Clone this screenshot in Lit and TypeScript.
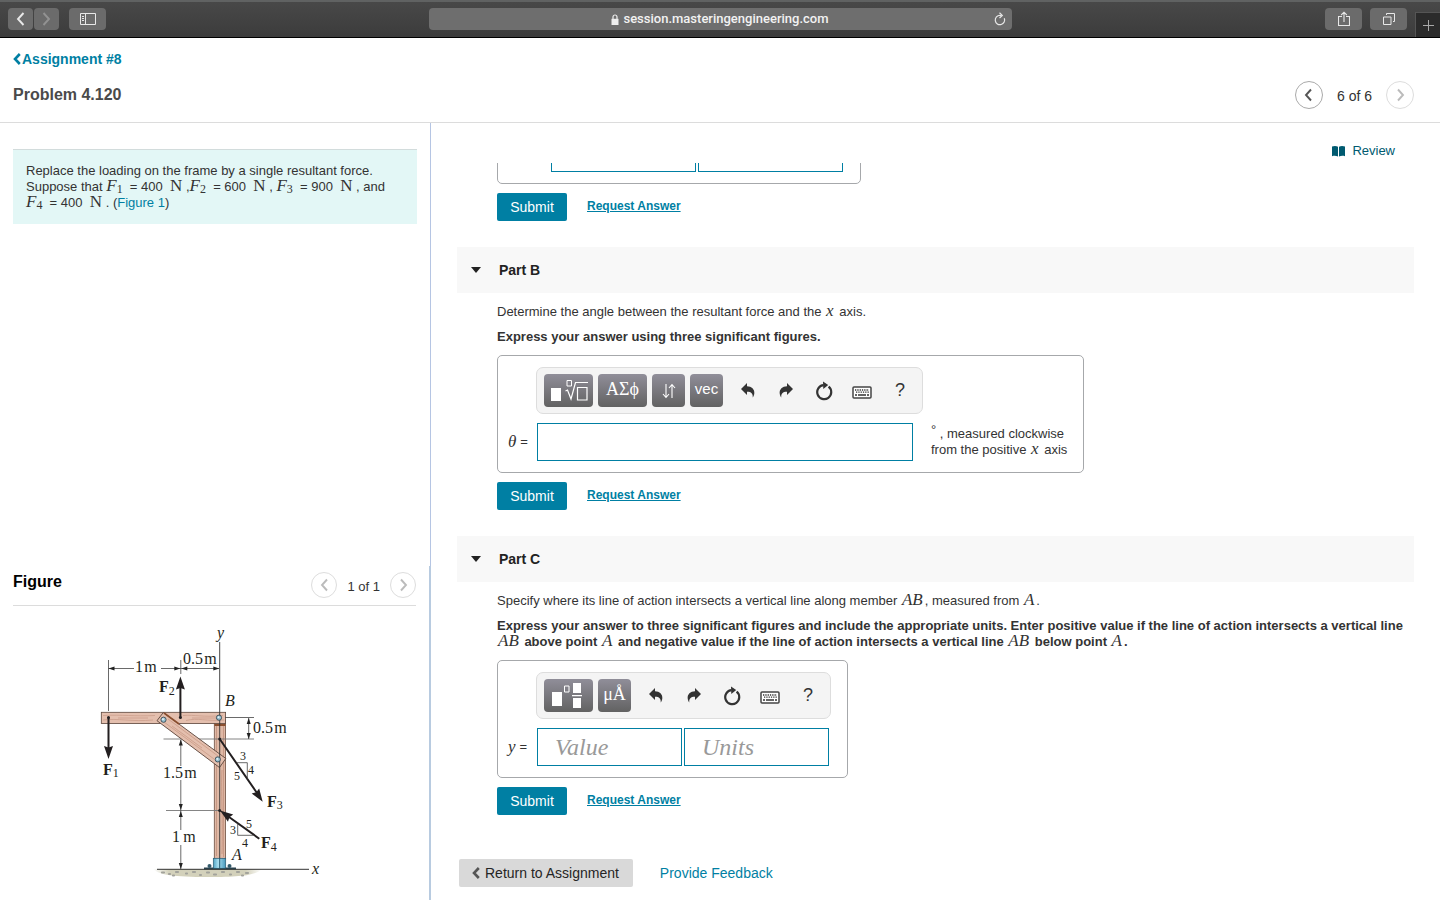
import { LitElement, html, svg, css } from "lit";
import { customElement, property } from "lit/decorators.js";

const undoIcon = html`<svg width="14" height="15" viewBox="0 0 14 15" aria-hidden="true"><path fill="#333" d="M6 0v3.200c4.600 .2 7.800 3 7.300 7.200-.2 1.700-.8 2.900-1.600 4 .4-3.800-1.600-5.700-5.700-5.600V12L0 6z"/></svg>`;
const redoIcon = html`<svg width="14" height="15" viewBox="0 0 14 15" aria-hidden="true"><path fill="#333" d="M8 0v3.200C3.400 3.400.2 6.200.7 10.400c.2 1.700.8 2.900 1.600 4-.4-3.800 1.600-5.700 5.700-5.600V12l6-6z"/></svg>`;
const resetIcon = html`<svg width="18" height="20" viewBox="0 0 18 20" aria-hidden="true"><path d="M13.600 5.700A7 7 0 1 1 8.600 4.200" fill="none" stroke="#333" stroke-width="2.200"/><path d="M8 .6l5.200 3.300L8.300 8z" fill="#333"/></svg>`;
const keyboardIcon = html`<svg width="20" height="13" viewBox="0 0 20 13" aria-hidden="true"><rect x="1" y="1" width="18" height="11" rx="1" fill="#fff" stroke="#444" stroke-width="1.500"/><path d="M3 4h14M4 6.200h13" stroke="#333" stroke-width="1.300" stroke-dasharray="1.300 1"/><path d="M3 9h2M6 9h8M15 9h2" stroke="#333" stroke-width="1.500"/></svg>`;
const chevronLeft = html`<svg width="9" height="14" viewBox="0 0 9 14" aria-hidden="true"><path d="M7 1.500L2 7l5 5.500" fill="none" stroke="currentColor" stroke-width="1.900"/></svg>`;
const chevronRight = html`<svg width="9" height="14" viewBox="0 0 9 14" aria-hidden="true"><path d="M2 1.500L7 7l-5 5.500" fill="none" stroke="currentColor" stroke-width="1.900"/></svg>`;
const boldChevron = html`<svg width="8" height="12" viewBox="0 0 8 12" aria-hidden="true"><path d="M6.800 1L2 6l4.800 5" fill="none" stroke="currentColor" stroke-width="2.600"/></svg>`;

@customElement("browser-bar")
class BrowserBar extends LitElement {
  static styles = css`
    :host { display: block; font-family: Roboto, "Liberation Sans", sans-serif; }
    .bar {
      box-sizing: border-box; height: 38px; display: grid;
      grid-template-columns: 1fr minmax(0, 583px) 1fr;
      border-top: 2px solid #606262; border-bottom: 1px solid #000;
      background: linear-gradient(#484848, #3c3c3c); align-items: start;
    }
    .group { display: flex; padding-top: 6px; gap: 1px; }
    .left { padding-left: 8px; }
    .right { justify-content: flex-end; gap: 8px; }
    button {
      height: 22px; padding: 0; border: 0; border-radius: 4px; background: #6b6b6b;
      color: #e8e8e8; display: flex; align-items: center; justify-content: center;
    }
    .small { width: 25px; }
    .dim { color: #929292; }
    .wide { width: 37px; }
    .gap { margin-left: 9px; }
    .tab {
      width: 25px; height: 25px; margin-top: 4px; border-radius: 0; background: #2b2b2b;
      border-left: 1px solid #555; border-top: 1px solid #555; color: #a8a8a8;
    }
    .address {
      margin-top: 6px; height: 22px; border-radius: 4px; background: #6e6e6e;
      display: grid; grid-template-columns: 24px 1fr 24px; align-items: center;
    }
    .location { grid-column: 2; display: flex; justify-content: center; align-items: center; gap: 4px; }
    input {
      field-sizing: content; border: 0; padding: 0; background: none; color: #f2f2f2;
      font: 500 13px/16px Roboto, "Liberation Sans", sans-serif; outline: 0;
    }
    .address button { background: none; width: 24px; }
  `;
  render() {
    return html`<div class="bar">
      <div class="group left">
        <button class="small" aria-label="Back"><svg width="9" height="14" viewBox="0 0 9 14"><path d="M7.500 1L2 7l5.500 6" fill="none" stroke="currentColor" stroke-width="1.900"/></svg></button>
        <button class="small dim" aria-label="Forward"><svg width="9" height="14" viewBox="0 0 9 14"><path d="M1.500 1L7 7l-5.500 6" fill="none" stroke="currentColor" stroke-width="1.900"/></svg></button>
        <button class="wide gap" aria-label="Sidebar"><svg width="16" height="12" viewBox="0 0 16 12"><path d="M.5.5h15v11H.5zM5.500.5v11M2 3.500h2M2 5.500h2M2 7.500h2" fill="none" stroke="currentColor"/></svg></button>
      </div>
      <div class="address">
        <div class="location">
          <svg width="8" height="11" viewBox="0 0 8 11" aria-hidden="true"><path d="M.5 4.800h7V11h-7z" fill="#eee"/><path d="M2 5V3a2 2 0 0 1 4 0v2" fill="none" stroke="#eee" stroke-width="1.200"/></svg>
          <input aria-label="Address" value="session.masteringengineering.com" />
        </div>
        <button aria-label="Reload"><svg width="12" height="14" viewBox="0 0 12 14"><path d="M10.300 6.200A4.700 4.700 0 1 1 6 3.300h1.500" fill="none" stroke="currentColor" stroke-width="1.200"/><path d="M5.500.7L8.300 3.400 5.500 6" fill="none" stroke="currentColor" stroke-width="1.200"/></svg></button>
      </div>
      <div class="group right">
        <button class="wide" aria-label="Share"><svg width="12" height="16" viewBox="0 0 12 16"><path d="M4 5.500H.5v9h11v-9H8M6 11V1.500M3.200 4L6 1.200 8.800 4" fill="none" stroke="currentColor" stroke-width="1.100"/></svg></button>
        <button class="wide" aria-label="Tabs"><svg width="12" height="12" viewBox="0 0 12 12"><path d="M.5 4h7.500v7.500H.5zM3.500 2V.5h8V8.500H10" fill="none" stroke="currentColor"/></svg></button>
        <button class="tab" aria-label="New tab"><svg width="11" height="11" viewBox="0 0 11 11"><path d="M5.500 0v11M0 5.500h11" stroke="currentColor"/></svg></button>
      </div>
    </div>`;
  }
}

@customElement("page-stepper")
class PageStepper extends LitElement {
  @property() label = "";
  @property({ type: Boolean, reflect: true }) compact = false;
  @property({ type: Boolean }) first = false;
  static styles = css`
    :host { display: block; font-family: "Liberation Sans", sans-serif; }
    .stepper { display: flex; align-items: center; gap: 14px; font-size: 14px; line-height: 16px; color: #333; }
    :host([compact]) .stepper { gap: 10px; font-size: 13px; padding-bottom: 1px; }
    button {
      box-sizing: border-box; width: 28px; height: 28px; padding: 0; border-radius: 50%;
      border: 1px solid #aaa; background: #fff; color: #555; display: grid; place-items: center;
    }
    :host([compact]) button { width: 26px; height: 26px; }
    button:disabled { border-color: #ddd; color: #bbb; }
    .count { padding-top: 2px; }
    :host([compact]) .count { padding-top: 4px; }
  `;
  render() {
    return html`<div class="stepper">
      <button aria-label="Previous" ?disabled=${this.first}>${chevronLeft}</button>
      <span class="count">${this.label}</span>
      <button aria-label="Next" disabled>${chevronRight}</button>
    </div>`;
  }
}

const dimHead = (x: number, y: number, angle: number) =>
  svg`<path d="M0 0l-6 -2v4z" fill="#222" transform="translate(${x} ${y}) rotate(${angle})"/>`;
const forceHead = (x: number, y: number, angle: number) =>
  svg`<path d="M0 0l-13 -4.500l1.500 4.500l-1.500 4.500z" fill="#231f20" transform="translate(${x} ${y}) rotate(${angle})"/>`;
const pin = (x: number, y: number) =>
  svg`<circle cx=${x} cy=${y} r="2.600" fill="#9cc3d3" stroke="#2b3b44" stroke-width=".8"/><circle cx=${x - 0.5} cy=${y - 0.5} r=".9" fill="#e8f5fa"/>`;

@customElement("frame-figure")
class FrameFigure extends LitElement {
  static styles = css`
    :host { display: block; }
    svg { display: block; font-family: "Liberation Serif", serif; fill: #231f20; }
    .dim, .it, .force { font-size: 16px; }
    .it { font-style: italic; }
    .force { font-weight: bold; }
    .sub { font-size: 12px; font-weight: normal; }
    .tri { font-size: 12px; }
  `;
  render() {
    return html`<svg width="260" height="270" viewBox="80 620 260 270" role="img" aria-label="Frame loaded by four forces">
      <defs>
        <linearGradient id="ground"><stop offset="0" stop-color="#d3d1bb" stop-opacity="0"/><stop offset=".15" stop-color="#d3d1bb"/><stop offset=".85" stop-color="#d3d1bb"/><stop offset="1" stop-color="#d3d1bb" stop-opacity="0"/></linearGradient>
        <linearGradient id="steel"><stop offset="0" stop-color="#4fa3c4"/><stop offset=".4" stop-color="#a9dff0"/><stop offset="1" stop-color="#4798bb"/></linearGradient>
      </defs>
      <path d="M153 869h109c-6 6-20 8-54 8s-49-2-55-8z" fill="url(#ground)"/>
      <path d="M162 872.500h2M169 874h1M176 872h2M186 873.500h1M193 872h2M200 875h1M207 872.500h2M214 874.500h2M222 872h2M230 874.500h1M237 872h2M246 873h2M173 875.500h1M242 875.500h1" stroke="#a3a39c" stroke-width="2.200" stroke-linecap="round"/>
      <rect x="214.300" y="720" width="11.300" height="139" fill="#dfb8a5" stroke="#6d4f42" stroke-width=".8"/>
      <path d="M216.500 726v130M223.500 724v133M222 770c-1 20 1 50 0 84" fill="none" stroke="#c1907c" stroke-width=".8"/>
      <path d="M214.500 725h11" stroke="#8a4f2f" stroke-width="2"/>
      <rect x="101.300" y="712.300" width="124.300" height="11.200" fill="#e4bfae" stroke="#5a443a" stroke-width=".8"/>
      <path d="M103 715.500c20-1 30 1 52 0M103 720c14-2 30 2 50 0M183 715.500c12-1 20 2 40 0M186 720.500c12-3 20 1 38-.5M118 718h30M192 718h24" fill="none" stroke="#c99a87" stroke-width=".7"/>
      <path d="M163.500 739H254M166 810.500h54" stroke="#777" stroke-width=".9"/>
      <path d="M163.300 712.500L225.800 758.500 219.500 767.500 157 720.700z" fill="#e4bfae" stroke="#5a443a" stroke-width=".9"/>
      <path d="M164 713l15 11" stroke="#8a4f2f" stroke-width="1.600"/>
      <path d="M168 719l50 37M164 722l50 37M172 726l30 22" fill="none" stroke="#c99a87" stroke-width=".8"/>
      <path d="M219.700 642v217" stroke="#333" stroke-width=".9"/>
      <path d="M108.500 660v51M180.800 660v14M225 717.500h29M108.500 668.500H134M161 668.500h58M248.700 718v21M180.800 740v26M180.800 780v50M180.800 845v24" fill="none" stroke="#444" stroke-width=".8"/>
      ${dimHead(108.5, 668.5, 180)}${dimHead(180.3, 668.5, 0)}${dimHead(181.3, 668.5, 180)}${dimHead(219.3, 668.5, 0)}
      ${dimHead(248.7, 718, -90)}${dimHead(248.7, 739, 90)}${dimHead(180.8, 739.5, -90)}${dimHead(180.8, 810, 90)}${dimHead(180.8, 811, -90)}${dimHead(180.8, 869, 90)}
      <path d="M204 867.500h32v2h-32z" fill="#274350"/>
      <circle cx="209.500" cy="866" r="2" fill="#345a6b"/><circle cx="229.500" cy="866" r="2" fill="#345a6b"/>
      <rect x="213.300" y="858.300" width="12.400" height="10" fill="url(#steel)" stroke="#265a70" stroke-width=".7"/>
      <path d="M219.700 858v11" stroke="#265a70"/>
      <path d="M157 869.300h152" stroke="#333" stroke-width="1"/>
      ${pin(163.5, 719.7)}${pin(219, 717.7)}${pin(217.8, 759.4)}
      <path d="M180.400 718v-32M108.500 717v32M219.700 739L257 793M259.300 838.700L229 817" stroke="#231f20" stroke-width="2" fill="none"/>
      ${forceHead(180.4, 676.5, -90)}${forceHead(108.5, 759, 90)}${forceHead(262.7, 801.8, 56)}${forceHead(220, 810.5, 215.5)}
      <circle cx="180.400" cy="717.500" r="1.500"/><circle cx="108.500" cy="717.500" r="1.500"/><circle cx="219.700" cy="739" r="1.500"/><circle cx="219.700" cy="810.500" r="1.500"/>
      <path d="M236.700 762.700h10.600v16.600M237.700 823.300v12h15.600" fill="none" stroke="#444" stroke-width=".8"/>
      <text class="it" x="217" y="638">y</text>
      <text class="it" x="312" y="874">x</text>
      <text class="it" x="225" y="706">B</text>
      <text class="it" x="232" y="860">A</text>
      <text class="dim" x="183" y="664">0.5&#x200A;m</text>
      <text class="dim" x="135" y="672">1&#x200A;m</text>
      <text class="dim" x="253" y="733">0.5&#x200A;m</text>
      <text class="dim" x="163" y="778">1.5&#x200A;m</text>
      <text class="dim" x="172" y="842">1&#x2009;m</text>
      <text class="force" x="159" y="692">F<tspan class="sub" dy="3">2</tspan></text>
      <text class="force" x="103" y="775">F<tspan class="sub" dy="2">1</tspan></text>
      <text class="force" x="267" y="807">F<tspan class="sub" dy="2">3</tspan></text>
      <text class="force" x="261" y="848">F<tspan class="sub" dy="3">4</tspan></text>
      <text class="tri" x="240" y="760">3</text><text class="tri" x="248" y="774">4</text><text class="tri" x="234" y="780">5</text>
      <text class="tri" x="230" y="834">3</text><text class="tri" x="246" y="828">5</text><text class="tri" x="242" y="847">4</text>
    </svg>`;
  }
}

const editTools = html`
  <button class="tool" aria-label="Undo">${undoIcon}</button>
  <button class="tool" aria-label="Redo">${redoIcon}</button>
  <button class="tool" aria-label="Reset">${resetIcon}</button>
  <button class="tool key" aria-label="Keyboard shortcuts">${keyboardIcon}</button>
  <button class="tool" aria-label="Help">?</button>`;

const submitRow = html`<div class="actions">
  <button class="submit">Submit</button><a class="request" href="#">Request Answer</a>
</div>`;

@customElement("app-root")
class AppRoot extends LitElement {
  static styles = css`
    :host { display: block; font-family: "Liberation Sans", Arial, sans-serif; font-size: 13px; line-height: 16px; color: #333; background: #fff; }
    .page { height: 100vh; display: grid; grid-template-rows: auto auto minmax(0, 1fr); overflow: hidden; }
    a { color: #007fa3; text-decoration: none; }
    p { margin: 0; }
    h1, h2, h3 { margin: 0; }
    button { font-family: inherit; }
    .header { display: flex; justify-content: space-between; padding: 13px 26px 18px 13px; border-bottom: 1px solid #dcdcdc; }
    .crumb { display: flex; align-items: center; gap: 1px; font-size: 14px; font-weight: bold; }
    .title { font-size: 16px; line-height: 18px; color: #4a4a4a; margin-top: 19px; }
    .pager { align-self: end; margin-bottom: -5px; }
    .columns { display: grid; grid-template-columns: 431px minmax(0, 1fr); min-height: 0; }
    .side { display: grid; grid-template-rows: 1fr auto; min-height: 0; }
    .problem { padding: 26px 13px 0; border-right: 1px solid #b5c5e3; }
    .statement { background: #e3f7f6; border-top: 1px solid #d2dcdc; padding: 13px 12px 13px 13px; }
    .eq { white-space: nowrap; }
    .v, .f, .n { font-family: "Liberation Serif", serif; font-size: 17px; line-height: 0; font-weight: normal; }
    .v, .f { font-style: italic; }
    .v { padding: 0 2px 0 1px; }
    .s { font-family: "Liberation Serif", serif; font-size: 12px; line-height: 0; position: relative; top: 2px; }
    .figure { border-right: 2px solid #b8cbe0; padding: 0 13px 10px; }
    .fighead { display: flex; justify-content: space-between; align-items: center; height: 39px; border-bottom: 1px solid #dcdcdc; }
    .fighead h2 { font-size: 16px; line-height: 18px; color: #000; padding-bottom: 8px; }
    .drawing { padding: 14px 0 0 67px; }
    .main { padding: 20px 26px 0; overflow: auto; }
    .review { display: flex; justify-content: flex-end; align-items: center; gap: 7px; padding-right: 19px; height: 16px; margin-bottom: 4px; }
    .review a { color: #005a70; }
    .body { padding-left: 40px; }
    .clip { height: 21px; overflow: hidden; display: flex; align-items: flex-end; }
    .answer {
      box-sizing: border-box; width: fit-content; border: 1px solid #a6a8ab; border-radius: 5px;
      padding: 11px 16px 11px 0; display: grid; grid-template-columns: 38px auto; row-gap: 9px;
    }
    .clip .answer { grid-template-columns: 52px auto; padding-right: 17px; }
    .answer label { grid-column: 1; display: flex; align-items: center; padding-left: 9px; white-space: pre; }
    .answer label .v { padding-right: 4px; line-height: 16px; }
    .fields { grid-column: 2; display: flex; gap: 2px; padding-left: 1px; align-items: center; }
    .fields input {
      box-sizing: border-box; width: 145px; height: 38px; border: 1px solid #007fa3; border-radius: 0; outline: 0;
      padding: 0 17px; background: #fff; font: italic 24px/32px "Liberation Serif", serif; color: #333;
    }
    .fields input::placeholder { color: #999; opacity: 1; }
    .fields .long { width: 376px; }
    .unit { padding-left: 16px; }
    .deg { position: relative; top: -4px; }
    .tools {
      grid-column: 2; justify-self: start; box-sizing: border-box; height: 47px; display: flex; padding: 6px 4px 6px 7px;
      background: #f4f4f4; border: 1px solid #ddd; border-radius: 7px;
    }
    .pad {
      box-sizing: border-box; height: 33px; width: 33px; padding: 0; margin-right: 5px; border: 0; border-radius: 4px; color: #fff;
      background: linear-gradient(#908e99, #626262); display: grid; place-items: center;
    }
    .wide { width: 49px; }
    .serif, .word { padding-bottom: 3px; }
    .word { font-size: 15px; line-height: 16px; }
    .serif { font: 18px/20px "Liberation Serif", serif; }
    .tool { box-sizing: border-box; width: 38px; height: 33px; padding: 0 0 0 2px; border: 0; background: none; color: #333; font-size: 18px; display: grid; place-items: center; }
    .key { padding-top: 3px; }
    .actions { display: flex; padding-top: 9px; padding-bottom: 26px; gap: 20px; }
    .submit { width: 70px; height: 28px; padding: 0; border: 0; border-radius: 2px; background: #007fa3; color: #fff; font-size: 14px; }
    .request { font-size: 12px; font-weight: bold; text-decoration: underline; padding-top: 5px; }
    .part { display: flex; align-items: center; height: 46px; background: #f8f8f8; padding-left: 14px; gap: 18px; }
    .part h3 { font-size: 14px; color: #222; }
    .text { padding: 11px 0 10px; display: grid; gap: 9px; }
    .bold { font-weight: bold; }
    .foot { display: flex; align-items: center; gap: 27px; padding: 18px 0 0 2px; font-size: 14px; }
    .return { display: flex; align-items: center; gap: 5px; height: 28px; border: 0; border-radius: 2px; background: #d9d9d9; color: #252525; padding: 0 14px 0 13px; font-size: 14px; }
    .return svg { color: #555; }
  `;

  private force(index: number, value: number, tail: string) {
    return html`<span class="eq"><span class="f">F</span><span class="s">${index}</span>&nbsp; = ${value} &nbsp;<span class="n">N</span>${tail}</span>`;
  }

  render() {
    const caret = html`<svg width="10" height="6" viewBox="0 0 10 6" aria-hidden="true"><path d="M0 0h10L5 6z" fill="#222"/></svg>`;
    return html`<div class="page">
      <browser-bar></browser-bar>
      <header class="header">
        <div>
          <a class="crumb" href="#">${boldChevron}<span>Assignment #8</span></a>
          <h1 class="title">Problem 4.120</h1>
        </div>
        <page-stepper class="pager" label="6 of 6"></page-stepper>
      </header>
      <div class="columns">
        <aside class="side">
          <div class="problem">
            <p class="statement">Replace the loading on the frame by a single resultant force. Suppose that ${this.force(1, 400, " ,")}${this.force(2, 600, " ,")} ${this.force(3, 900, " ,")} and ${this.force(4, 400, " .")} (<a href="#">Figure 1</a>)</p>
          </div>
          <section class="figure">
            <div class="fighead"><h2>Figure</h2><page-stepper compact first label="1 of 1"></page-stepper></div>
            <div class="drawing"><frame-figure></frame-figure></div>
          </section>
        </aside>
        <main class="main">
          <div class="review">
            <svg width="13" height="11" viewBox="0 0 13 11" aria-hidden="true"><path d="M0 .5c2-.7 4.500-.7 6 .3V10.500c-2-.8-4-.8-6-.3zM13 .5c-2-.7-4.500-.7-6 .3V10.500c2-.8 4-.8 6-.3z" fill="#005a70"/></svg>
            <a href="#">Review</a>
          </div>
          <div class="body">
            <div class="clip"><div class="answer"><div class="fields"><input aria-label="Resultant value" /><input aria-label="Resultant units" /></div></div></div>
            ${submitRow}
          </div>
          <div class="part">${caret}<h3>Part B</h3></div>
          <div class="body">
            <div class="text">
              <p>Determine the angle between the resultant force and the <span class="v">x</span> axis.</p>
              <p class="bold">Express your answer using three significant figures.</p>
            </div>
            <div class="answer">
              <div class="tools">
                <button class="pad wide" aria-label="Templates"><svg width="38" height="24" viewBox="0 0 38 24"><path d="M1 9h10v13H1z" fill="#fff"/><path d="M17 1.500h4.500v5.500H17z" fill="none" stroke="#fff"/><path d="M15.500 12l2-1 3.500 9L25.500 3.500H38M27.500 8.500h9.500v12.500h-9.500z" fill="none" stroke="#fff" stroke-width="1.200"/></svg></button>
                <button class="pad wide serif">ΑΣϕ</button>
                <button class="pad" aria-label="Arrows"><svg width="14" height="16" viewBox="0 0 14 16"><path d="M4 1v13M1 11l3 3.500L7 11M10 15V2M7 5l3-3.500L13 5" fill="none" stroke="#fff" stroke-width="1.100"/></svg></button>
                <button class="pad word">vec</button>
                ${editTools}
              </div>
              <label for="theta"><span class="v">θ</span>=</label>
              <div class="fields"><input id="theta" class="long" /><div class="unit"><span class="deg">°</span> , measured clockwise<br />from the positive <span class="v">x</span> axis</div></div>
            </div>
            ${submitRow}
          </div>
          <div class="part">${caret}<h3>Part C</h3></div>
          <div class="body">
            <div class="text">
              <p>Specify where its line of action intersects a vertical line along member <span class="v">AB</span>, measured from <span class="v">A</span>.</p>
              <p class="bold">Express your answer to three significant figures and include the appropriate units. Enter positive value if the line of action intersects a vertical line <span class="v">AB</span> above point <span class="v">A</span> and negative value if the line of action intersects a vertical line <span class="v">AB</span> below point <span class="v">A</span>.</p>
            </div>
            <div class="answer">
              <div class="tools">
                <button class="pad wide" aria-label="Templates"><svg width="36" height="28" viewBox="0 0 36 28"><path d="M1 10h10v14H1zM22 1h8v10h-8zM22 16h8v10h-8zM21 13h10v1.200H21z" fill="#fff"/><path d="M13.500 4h4.500v6h-4.500z" fill="none" stroke="#fff"/></svg></button>
                <button class="pad serif">μÅ</button>
                ${editTools}
              </div>
              <label for="yval"><span class="v">y</span>=</label>
              <div class="fields"><input id="yval" placeholder="Value" /><input aria-label="Units" placeholder="Units" /></div>
            </div>
            ${submitRow}
          </div>
          <div class="foot"><button class="return">${boldChevron}Return to Assignment</button><a href="#">Provide Feedback</a></div>
        </main>
      </div>
    </div>`;
  }
}
